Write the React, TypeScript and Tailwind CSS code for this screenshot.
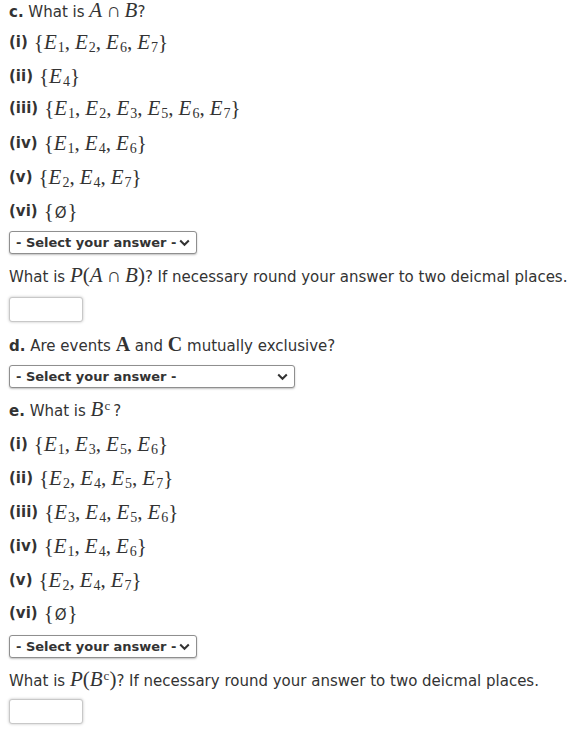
import React from "react";

const M = "font-['Liberation_Serif','DejaVu_Serif',serif] leading-none";

function E({ n }: { n: number }) {
  return (
    <span className="italic">
      E<sub className="not-italic text-[14px] leading-none ml-[1px]">{n}</sub>
    </span>
  );
}

function Set({ items }: { items: number[] }) {
  return (
    <span className={`${M} text-[21px]`}>
      {"{"}
      {items.map((n, i) => (
        <React.Fragment key={i}>
          <E n={n} />
          {i < items.length - 1 ? <span className="mr-[5px]">,</span> : null}
        </React.Fragment>
      ))}
      {"}"}
    </span>
  );
}

function EmptySet() {
  return (
    <span className={`${M} text-[21px]`}>
      {"{"}
      <span className="font-['DejaVu_Sans',sans-serif] text-[15px] px-[1px]">Ø</span>
      {"}"}
    </span>
  );
}

function Opt({ label, children, mt }: { label: string; children: React.ReactNode; mt: string }) {
  return (
    <div className={`h-[22px] leading-[22px] flex items-center whitespace-nowrap ${mt}`}>
      <span className="font-bold mr-[6px]">{label}</span>
      {children}
    </div>
  );
}

function Chevron() {
  return (
    <svg width="11" height="8" viewBox="0 0 11 8" className="shrink-0">
      <path d="M1.2 1.5 L5.5 5.8 L9.8 1.5" fill="none" stroke="#333" strokeWidth="2" />
    </svg>
  );
}

function Select({ w, mt }: { w: string; mt: string }) {
  return (
    <div
      className={`${w} ${mt} h-[23px] border border-[#8f8f8f] rounded-[3px] bg-white shadow-[0_1px_2px_rgba(0,0,0,0.25)] flex items-center justify-between pl-[6px] pr-[6px]`}
    >
      <span className="font-bold text-[13px] text-[#333] whitespace-nowrap">- Select your answer -</span>
      <Chevron />
    </div>
  );
}

function Input({ mt }: { mt: string }) {
  return (
    <div
      className={`w-[74px] h-[25px] ${mt} border border-[#c8c8c8] rounded-[3px] bg-white shadow-[0_0_3px_rgba(0,0,0,0.25)]`}
    />
  );
}

function Cap() {
  return <span className={`${M} text-[20px] mx-[4px]`}>∩</span>;
}

export default function App() {
  return (
    <div className="bg-white w-[585px] h-[733px] overflow-hidden font-['DejaVu_Sans','Verdana',sans-serif] text-[15px] text-[#333] pl-[9px]">
      <div className="h-[18px] leading-[18px] whitespace-nowrap">
        <span className="font-bold">c.</span> What is{" "}
        <span className={`${M} text-[21px] italic`}>A</span>
        <Cap />
        <span className={`${M} text-[21px] italic`}>B</span>?
      </div>
      <Opt label="(i)" mt="mt-[13px]"><Set items={[1, 2, 6, 7]} /></Opt>
      <Opt label="(ii)" mt="mt-[12px]"><Set items={[4]} /></Opt>
      <Opt label="(iii)" mt="mt-[10px]"><Set items={[1, 2, 3, 5, 6, 7]} /></Opt>
      <Opt label="(iv)" mt="mt-[13px]"><Set items={[1, 4, 6]} /></Opt>
      <Opt label="(v)" mt="mt-[12px]"><Set items={[2, 4, 7]} /></Opt>
      <Opt label="(vi)" mt="mt-[12px]"><EmptySet /></Opt>
      <Select w="w-[188px]" mt="mt-[9px]" />
      <div className="h-[22px] leading-[22px] mt-[11px] whitespace-nowrap">
        What is <span className={`${M} text-[21px] italic`}>P</span>
        <span className={`${M} text-[21px]`}>(</span>
        <span className={`${M} text-[21px] italic`}>A</span>
        <Cap />
        <span className={`${M} text-[21px] italic`}>B</span>
        <span className={`${M} text-[21px]`}>)</span>? If necessary round your answer to two deicmal places.
      </div>
      <Input mt="mt-[10px]" />
      <div className="h-[22px] leading-[22px] mt-[12px] whitespace-nowrap">
        <span className="font-bold">d.</span> Are events{" "}
        <span className={`${M} text-[20px] font-bold`}>A</span> and{" "}
        <span className={`${M} text-[20px] font-bold`}>C</span> mutually exclusive?
      </div>
      <Select w="w-[286px]" mt="mt-[9px]" />
      <div className="h-[22px] leading-[22px] mt-[11px] whitespace-nowrap">
        <span className="font-bold">e.</span> What is{" "}
        <span className={`${M} text-[21px] italic`}>B</span>
        <sup className={`${M} text-[13px] ml-[1px]`}>c</sup>
        <span className="ml-[3px]">?</span>
      </div>
      <Opt label="(i)" mt="mt-[12px]"><Set items={[1, 3, 5, 6]} /></Opt>
      <Opt label="(ii)" mt="mt-[12px]"><Set items={[2, 4, 5, 7]} /></Opt>
      <Opt label="(iii)" mt="mt-[12px]"><Set items={[3, 4, 5, 6]} /></Opt>
      <Opt label="(iv)" mt="mt-[12px]"><Set items={[1, 4, 6]} /></Opt>
      <Opt label="(v)" mt="mt-[12px]"><Set items={[2, 4, 7]} /></Opt>
      <Opt label="(vi)" mt="mt-[11px]"><EmptySet /></Opt>
      <Select w="w-[188px]" mt="mt-[11px]" />
      <div className="h-[22px] leading-[22px] mt-[11px] whitespace-nowrap">
        What is <span className={`${M} text-[21px] italic`}>P</span>
        <span className={`${M} text-[21px]`}>(</span>
        <span className={`${M} text-[21px] italic`}>B</span>
        <sup className={`${M} text-[13px] ml-[1px]`}>c</sup>
        <span className={`${M} text-[21px]`}>)</span>? If necessary round your answer to two deicmal places.
      </div>
      <Input mt="mt-[8px]" />
    </div>
  );
}
